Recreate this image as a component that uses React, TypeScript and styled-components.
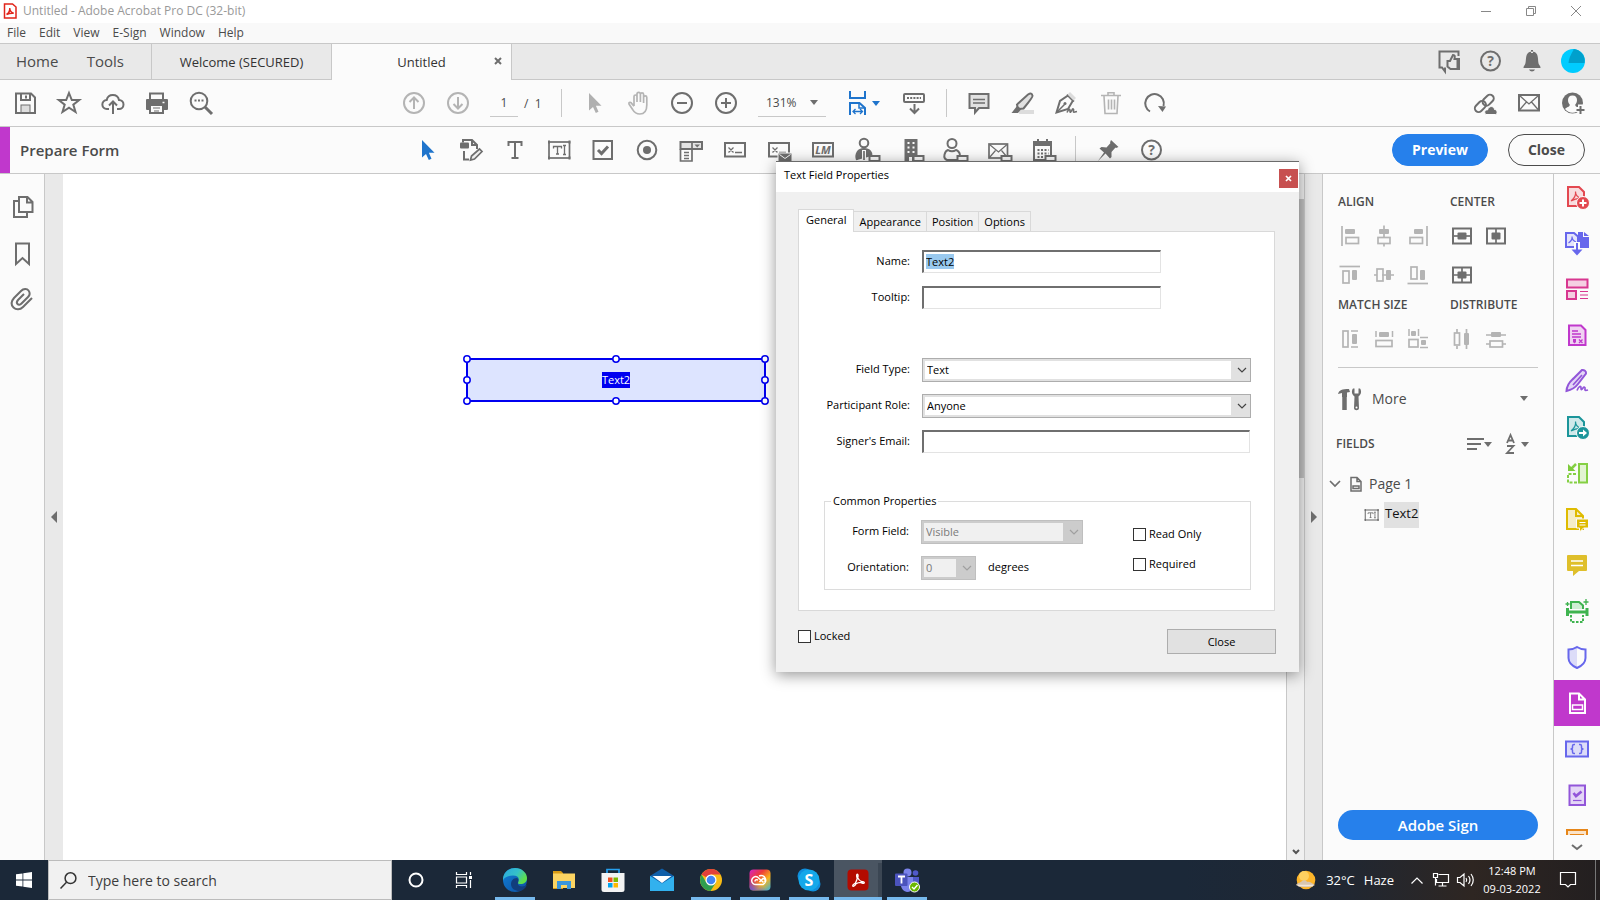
import React, { useEffect, useRef } from "react";
import styled, { createGlobalStyle, css } from "styled-components";

const UI = `"Open Sans", "Noto Sans", sans-serif`;
const INK = "#6e6e6e";
const PALE = "#b4b4b4";
const LINE = "#c8c8c8";
const BLUE = "#2680eb";
const MAGENTA = "#c038cc";
const FIELD = "#0000f0";

const GlobalStyle = createGlobalStyle`
  * { box-sizing: border-box; }
  body { margin: 0; font-family: ${UI}; font-size: 12px; color: #4b4b4b; overflow: hidden; }
  button, input, select { font-family: inherit; font-size: inherit; color: inherit; margin: 0; }
  button { cursor: pointer; }
`;

/* ---------- shared parts ---------- */

const Shell = styled.div`
  display: flex;
  flex-direction: column;
  height: 100vh;
  background: #fbfbfb;
`;

const Svg = styled.svg`
  display: block;
  flex: none;
  overflow: visible;
`;

type IconProps = { size?: number; color?: string; children: React.ReactNode };
const Icon = ({ size = 24, color = INK, children }: IconProps) => (
  <Svg width={size} height={size} viewBox={`0 0 ${size} ${size}`} fill="none" stroke={color} strokeWidth={2} aria-hidden="true">
    {children}
  </Svg>
);

const BareButton = styled.button`
  display: flex;
  align-items: center;
  justify-content: center;
  padding: 0;
  border: 0;
  background: none;
`;

const ToolButton = styled(BareButton)<{ $w?: number }>`
  width: ${(p) => p.$w ?? 44}px;
  height: 44px;
  flex: none;
`;

const Divider = styled.span`
  width: 1px;
  height: 28px;
  margin: 0 10px;
  background: ${LINE};
`;

const Caret = ({ color = INK }: { color?: string }) => (
  <Svg width="8" height="5" viewBox="0 0 8 5" fill={color} aria-hidden="true">
    <path d="M0 0h8L4 5z" />
  </Svg>
);

/* ---------- window chrome ---------- */

const TitleBar = styled.header`
  display: flex;
  align-items: center;
  height: 23px;
  flex: none;
  padding: 0 0 2px 3px;
  gap: 6px;
  background: #fff;
  color: #999;
`;

const WindowButtons = styled.div`
  display: flex;
  margin-left: auto;
  padding-right: 2px;
`;

const WindowButton = styled(BareButton)`
  width: 45px;
  height: 20px;
`;

const MenuBar = styled.nav`
  display: flex;
  align-items: center;
  height: 21px;
  flex: none;
  padding-left: 7px;
  gap: 13px;
  border-bottom: 1px solid ${LINE};
  background: #f9f9f9;
`;

const MenuItem = styled(BareButton)`
  font-size: 12px;
  line-height: 18px;
`;

const TabStrip = styled.div`
  display: flex;
  height: 36px;
  flex: none;
  background: #e9e9e9;
  box-shadow: inset 0 -1px ${LINE};
`;

const PlainTabs = styled.div`
  display: flex;
  width: 151px;
  padding: 0 27px 2px 16px;
  justify-content: space-between;
  font-size: 15px;
`;

const DocTab = styled.div<{ $active?: boolean }>`
  position: relative;
  display: flex;
  width: 180px;
  border-left: 1px solid ${LINE};
  color: #333;
  ${(p) =>
    p.$active &&
    css`
      width: 181px;
      border-right: 1px solid ${LINE};
      background: #fbfbfb;
    `}
`;

const DocTabLabel = styled(BareButton)`
  flex: 1;
  font-size: 13px;
`;

const DocTabClose = styled(BareButton)`
  position: absolute;
  right: 6px;
  top: 7px;
  width: 14px;
  height: 20px;
`;

const StripActions = styled.div`
  display: flex;
  align-items: center;
  margin-left: auto;
  padding: 0 7px 2px 0;
`;

const Toolbar = styled.div`
  display: flex;
  align-items: center;
  height: 47px;
  flex: none;
  border-bottom: 1px solid ${LINE};
  background: #fbfbfb;
`;

const FileTools = styled.div`
  display: flex;
  width: 392px;
  padding-left: 3px;
`;

const ToolGroup = styled.div<{ $end?: boolean }>`
  display: flex;
  align-items: center;
  ${(p) => p.$end && "margin-left: auto; padding-right: 5px;"}
`;

const PageBox = styled.div`
  display: flex;
  align-items: center;
  width: 71px;
  padding-left: 10px;
  gap: 6px;
  font-size: 12px;
`;

const PageInput = styled.input`
  width: 28px;
  height: 28px;
  padding: 0;
  border: 0;
  border-bottom: 1px solid ${LINE};
  background: none;
  text-align: center;
`;

const ZoomBox = styled.label`
  display: flex;
  align-items: center;
  width: 68px;
  height: 28px;
  margin: 0 11px 0 10px;
  padding-right: 8px;
  border-bottom: 1px solid ${LINE};
`;

const ZoomSelect = styled.select`
  flex: 1;
  min-width: 0;
  padding: 0 0 0 8px;
  border: 0;
  appearance: none;
  background: none;
`;

const FitButton = styled(ToolButton)`
  gap: 4px;
  margin-right: 5px;
`;

const FormTitle = styled.h1`
  align-self: stretch;
  display: flex;
  align-items: center;
  width: 405px;
  margin: 0;
  padding-left: 10px;
  border-left: 10px solid ${MAGENTA};
  font-size: 15px;
  font-weight: 600;
`;

const FormActions = styled.div`
  display: flex;
  gap: 20px;
  margin-left: auto;
  padding-right: 15px;
`;

const Pill = styled.button<{ $solid?: boolean }>`
  height: 32px;
  padding: 0 19px;
  border: 1px solid ${(p) => (p.$solid ? BLUE : "#4b4b4b")};
  border-radius: 16px;
  background: ${(p) => (p.$solid ? BLUE : "transparent")};
  color: ${(p) => (p.$solid ? "#fff" : "#4b4b4b")};
  font-size: 14px;
  line-height: 20px;
  font-weight: 700;
`;

/* ---------- body ---------- */

const Body = styled.div`
  display: flex;
  flex: 1;
  min-height: 0;
`;

const LeftRail = styled.nav`
  display: flex;
  flex-direction: column;
  align-items: center;
  width: 45px;
  padding-top: 10px;
  border-right: 1px solid ${LINE};
`;

const RailButton = styled(BareButton)`
  width: 44px;
  height: 46px;
`;

const Gutter = styled.div<{ $w: number }>`
  display: flex;
  align-items: center;
  justify-content: center;
  width: ${(p) => p.$w}px;
  background: #e9e9e9;
`;

const Page = styled.main`
  position: relative;
  flex: 1;
  background: #fff;
`;

const FieldBox = styled.div`
  position: absolute;
  left: 403px;
  top: 184px;
  display: flex;
  align-items: center;
  justify-content: center;
  width: 300px;
  height: 44px;
  border: 2px solid ${FIELD};
  background: #dde4ff;
`;

const FieldName = styled.span`
  padding: 0;
  background: ${FIELD};
  color: #fff;
  font-size: 11px;
  line-height: 16px;
`;

const Handle = styled(Svg)<{ $x: number; $y: number }>`
  position: absolute;
  left: ${(p) => `calc((100% + 2px) * ${p.$x} - 5px)`};
  top: ${(p) => `calc((100% + 2px) * ${p.$y} - 5px)`};
  fill: #fff;
  stroke: ${FIELD};
  stroke-width: 1.5;
`;

const ScrollBar = styled.div`
  display: flex;
  flex-direction: column;
  align-items: center;
  width: 19px;
  padding-bottom: 5px;
  border: solid ${LINE};
  border-width: 0 1px;
  background: #f0f0f0;
`;

const Thumb = styled.div`
  align-self: stretch;
  height: 279px;
  margin: 25px 0 auto;
  background: #c1c1c1;
`;

const SidePanel = styled.aside`
  display: flex;
  flex-direction: column;
  width: 232px;
  padding: 0 15px 20px;
  border: solid ${LINE};
  border-width: 0 1px;
`;

const Pairs = styled.div`
  display: grid;
  grid-template-columns: 112px 88px;
  padding-top: 16px;
`;

const PanelHeading = styled.h2`
  margin: 0;
  font-size: 12px;
  line-height: 24px;
  font-weight: 600;
`;

const IconGrid = styled.div<{ $tall?: boolean }>`
  display: flex;
  flex-wrap: wrap;
  align-content: flex-start;
  row-gap: 4px;
  height: ${(p) => (p.$tall ? 79 : 45)}px;
  padding-top: 4px;
`;

const AlignButton = styled(BareButton)`
  width: 34px;
  height: 35px;
  padding-right: 10px;
`;

const MoreRow = styled(BareButton)`
  justify-content: flex-start;
  gap: 10px;
  height: 62px;
  margin-top: 5px;
  padding-right: 10px;
  border-top: 1px solid ${LINE};
  font-size: 14px;
`;

const Push = styled.span`
  margin-left: auto;
`;

const FieldsHead = styled.div`
  display: flex;
  align-items: center;
  height: 24px;
  margin: 3px 0 0 -2px;
  padding-right: 9px;
`;

const SortButton = styled(BareButton)<{ $gap: number }>`
  gap: ${(p) => p.$gap}px;
  margin-left: 13px;
`;

const Tree = styled.ul`
  margin: 12px 0 auto -9px;
  padding: 0;
  list-style: none;
  font-size: 14px;
`;

const TreeItem = styled.li<{ $child?: boolean }>`
  display: flex;
  align-items: center;
  gap: 5px;
  height: 31px;
  padding-left: ${(p) => (p.$child ? 35 : 0)}px;
  color: ${(p) => (p.$child ? "#111" : "#4b4b4b")};
`;

const Picked = styled.span`
  height: 26px;
  padding: 0 1px;
  background: #e1e1e1;
  font-size: 13px;
  line-height: 23px;
`;

const SignButton = styled.button`
  height: 30px;
  border: 0;
  border-radius: 15px;
  background: ${BLUE};
  color: #fff;
  font-size: 15px;
  font-weight: 600;
`;

const RightRail = styled.nav`
  display: flex;
  flex-direction: column;
  width: 46px;
  overflow: hidden;
`;

const AppButton = styled(BareButton)<{ $active?: boolean }>`
  height: 46px;
  flex: none;
  background: ${(p) => (p.$active ? MAGENTA : "none")};
`;

const RailEnd = styled(BareButton)`
  flex: 1;
  flex-direction: column;
  justify-content: flex-end;
  gap: 9px;
  padding-bottom: 9px;
`;

/* ---------- dialog ---------- */

const Dialog = styled.section`
  position: absolute;
  left: 776px;
  top: 161px;
  width: 523px;
  border-top: 1px solid #6b6b6b;
  background: #f0f0f0;
  box-shadow: 0 3px 14px rgba(0, 0, 0, 0.42);
  color: #000;
  font-size: 11px;
  line-height: 16px;
`;

const DialogTitle = styled.header`
  display: flex;
  align-items: center;
  justify-content: space-between;
  height: 30px;
  padding: 0 1px 5px 8px;
  background: #fff;
`;

const DialogX = styled(BareButton)`
  width: 19px;
  height: 19px;
  margin-top: 8px;
  background: #c75050;
`;

const DialogBody = styled.div`
  padding: 17px 24px 18px 22px;
`;

const Tabs = styled.div`
  display: flex;
  align-items: flex-end;
  height: 22px;
`;

const Tab = styled.button<{ $on?: boolean }>`
  height: 20px;
  padding: 0 5px;
  border: 1px solid #d9d9d9;
  border-width: 1px 1px 0 0;
  background: #f0f0f0;
  line-height: 18px;
  ${(p) =>
    p.$on &&
    css`
      z-index: 1;
      height: 23px;
      margin-bottom: -1px;
      padding: 0 7px 2px;
      border-left-width: 1px;
      background: #fff;
    `}
`;

const TabPanel = styled.div`
  height: 380px;
  padding: 18px 23px 20px 25px;
  border: 1px solid #d9d9d9;
  background: #fff;
`;

const Row = styled.div<{ $gap?: number }>`
  display: flex;
  align-items: flex-start;
  height: 24px;
  margin-bottom: ${(p) => p.$gap ?? 12}px;
`;

const Label = styled.label<{ $w?: number }>`
  width: ${(p) => p.$w ?? 86}px;
  margin-right: 12px;
  text-align: right;
  line-height: 22px;
  white-space: nowrap;
`;

const TextInput = styled.input<{ $wide?: boolean }>`
  width: ${(p) => (p.$wide ? 328 : 239)}px;
  height: 23px;
  padding: 0 2px 2px;
  border: solid;
  border-width: 2px 1px 1px 2px;
  border-color: #6f6f6f #e3e3e3 #e3e3e3 #6f6f6f;
  background: #fff;
  outline: 0;
  &::selection { background: #99c9ef; color: #000; }
`;

const SelectFrame = styled.span<{ $w: number; $off?: boolean }>`
  display: flex;
  align-items: center;
  width: ${(p) => p.$w}px;
  height: 24px;
  padding: 2px 3px 2px 2px;
  border: 1px solid ${(p) => (p.$off ? "#bfbfbf" : "#adadad")};
  background: ${(p) => (p.$off ? "#cccccc" : "#e1e1e1")};
  gap: 6px;
`;

const Select = styled.select`
  flex: 1;
  min-width: 0;
  height: 18px;
  padding: 0 0 0 2px;
  border: 0;
  appearance: none;
  background: #fff;
  line-height: 18px;
  &:disabled { background: #f0f0f0; color: #7a7a7a; opacity: 1; }
`;

const Group = styled.fieldset`
  display: flex;
  height: 98px;
  margin: 38px 0 0;
  padding: 10px 0 0 11px;
  border: 1px solid #dcdcdc;
`;

const GroupLegend = styled.legend`
  margin-left: -5px;
  padding: 0 2px;
  line-height: 18px;
`;

const Column = styled.div<{ $left?: number }>`
  display: flex;
  flex-direction: column;
  margin-left: ${(p) => p.$left ?? 0}px;
`;

const Unit = styled.span`
  margin-left: 12px;
  line-height: 22px;
`;

const Check = styled.label`
  display: flex;
  align-items: center;
  gap: 3px;
  height: 18px;
  margin: 5px 0 7px;
  white-space: nowrap;
`;

const CheckInput = styled.input`
  width: 13px;
  height: 13px;
  border: 1px solid #333;
  appearance: none;
  background: #fff;
`;

const DialogFoot = styled.footer`
  display: flex;
  justify-content: space-between;
  padding-top: 11px;
  margin-right: -1px;
`;

const DialogClose = styled.button`
  width: 109px;
  height: 25px;
  margin-top: 7px;
  border: 1px solid #adadad;
  background: #e1e1e1;
`;

/* ---------- taskbar ---------- */

const TaskBar = styled.footer`
  display: flex;
  height: 40px;
  flex: none;
  background: linear-gradient(90deg, #1b2838 0, #1b2838 74%, #202732 84%, #2e2622 92%, #231f20 100%);
  color: #fff;
`;

const Start = styled(BareButton)`
  width: 48px;
`;

const SearchBox = styled.label`
  display: flex;
  align-items: center;
  width: 344px;
  padding-left: 11px;
  gap: 11px;
  border: 1px solid #bcbcbc;
  background: #f1f1f1;
`;

const SearchInput = styled.input`
  flex: 1;
  padding: 0;
  border: 0;
  outline: 0;
  background: none;
  font-size: 14px;
  &::placeholder { color: #3c3c3c; opacity: 1; }
`;

const AppIcons = styled.div`
  display: flex;
  padding-left: 2px;
`;

const TaskButton = styled(BareButton)<{ $open?: boolean; $active?: boolean }>`
  width: ${(p) => (p.$active ? 48 : 40)}px;
  margin: ${(p) => (p.$active ? "0 0 0 1px" : "0 4px 0 5px")};
  border: solid transparent;
  border-width: 3px 0;
  ${(p) => p.$open && "border-bottom-color: #76b9ed;"}
  ${(p) => p.$active && "background: #4a5562; border-top-color: #4a5562; box-shadow: inset -4px 0 #3b4653;"}
`;

const Tray = styled.div`
  display: flex;
  align-items: center;
  margin-left: auto;
  padding-right: 4px;
  font-size: 13px;
`;

const Weather = styled.span`
  display: flex;
  align-items: center;
  gap: 9px;
  margin-right: 11px;
`;

const TrayIcon = styled(BareButton)`
  width: 24px;
  height: 40px;
`;

const Clock = styled.time`
  width: 66px;
  margin: 0 3px 0 2px;
  text-align: center;
  font-size: 11px;
  line-height: 18px;
  white-space: nowrap;
`;

const Notice = styled(BareButton)`
  width: 48px;
  height: 40px;
  border-right: 1px solid #777;
  padding-right: 8px;
`;

/* ---------- drawings ---------- */

const Glyph = styled.text<{ $light?: boolean }>`
  fill: ${(p) => (p.$light ? "#fff" : INK)};
  stroke: none;
  text-anchor: middle;
  font-family: ${UI};
`;

const acrobatMark = "M11.3 6.2c.9 0 1 1.8.4 3.6 1 2 2.400 3.100 3.600 3.700 2 .1 3.200.5 3 1.300-.3 1-2 .5-3.500-.4-1.800.1-3.400.6-4.700 1.200-1.200 2-2.500 3.200-3.200 2.600-.7-.7.700-2.200 2.500-3.200.800-1.400 1.500-3 1.800-4.700-.7-1.800-.8-4.100.1-4.100z";

const IconSave = () => (
  <Icon><path d="M3 2.500h15l4 4V22H3zM8 3v6h9V3" /><path d="M13 4.500v3" /><rect x="8" y="14" width="9" height="7.500" fill="#ddd" strokeWidth="1" /></Icon>
);
const IconStar = () => (
  <Icon><path d="M12 2l2.800 7h7.400l-5.900 4.600 2.200 7.400L12 16.700 5.500 21l2.200-7.400L1.800 9h7.400z" /></Icon>
);
const IconUpload = () => (
  <Icon><path d="M8 18H6a4.500 4.500 0 0 1-.3-9A6.300 6.300 0 0 1 18 9a4.500 4.500 0 0 1 0 9h-2M12 23V11M8 14.500l4-4 4 4" /></Icon>
);
const IconPrint = () => (
  <Icon><path d="M5 8V2.500h13V8" /><path d="M2 9h20v9H2z" fill={INK} strokeLinejoin="round" /><rect x="5" y="14" width="13" height="8" fill="#fbfbfb" /><path d="M8 17h7M9 20h5" strokeWidth="1.200" /><path d="M17.500 11.500h2" stroke="#fff" strokeWidth="1.500" /></Icon>
);
const IconFind = () => (
  <Icon><circle cx="10" cy="10" r="8.300" /><path d="M16 16l7 7" strokeWidth="3" /><path d="M5.500 9.500h9" strokeDasharray="2 1.500" /></Icon>
);
const IconArrow = ({ down }: { down?: boolean }) => (
  <Icon color={PALE}>
    <circle cx="12" cy="12" r="10" />
    <g transform={down ? "rotate(180 12 12)" : undefined}><path d="M12 18V7M7.500 11l4.500-4.500 4.500 4.500" /></g>
  </Icon>
);
const Pointer = ({ color }: { color: string }) => (
  <Icon><path d="M7 2v17.500l4-3.500 2.800 6 2.700-1.200-2.600-6h5.600z" fill={color} stroke="none" /></Icon>
);
const IconHand = () => (
  <Icon color={PALE}><path d="M6.500 15V5.500a1.500 1.500 0 0 1 3 0V11M9.500 11V3a1.700 1.700 0 0 1 3.400 0v8M12.900 11V3.500a1.600 1.600 0 0 1 3.200 0V12M16.100 12V6.500a1.600 1.600 0 0 1 3.200 0V14c0 6-2.500 9-7 9-5 0-6-2.500-7.500-5L1.500 13c-.6-1.300 1-2.300 2-1.300l3 3.500" strokeWidth="1.700" transform="translate(1.500 0)" /></Icon>
);
const IconZoom = ({ plus }: { plus?: boolean }) => (
  <Icon><circle cx="12" cy="12" r="10" /><path d={plus ? "M7 12h10M12 7v10" : "M7 12h10"} /></Icon>
);
const IconFit = () => (
  <Icon color="#1f74cc"><path d="M6 0v7h15V0M6 24V12h9.500l5.500 5v7" /><path d="M15 12v5h6" strokeWidth="1.500" /><path d="M9 20.500h9M11.500 18L9 20.500l2.500 2.500M16 18l2.500 2.500L16 23" strokeWidth="1.300" /></Icon>
);
const IconScroll = () => (
  <Icon><rect x="2" y="3" width="20" height="8" rx="1" /><path d="M5 7h14" strokeDasharray="2 1.200" /><path d="M12.500 13v9M8 17.500l4.500 4.500 4.500-4.500" /></Icon>
);
const IconComment = () => (
  <Icon><path d="M2.500 3h19v14H12l-4 4.500V17H2.500z" fill="#e1e1e1" /><path d="M6 8.500h12M6 12h12" strokeWidth="1.300" /></Icon>
);
const IconHighlight = () => (
  <Icon><path d="M8 19h15v4H8z" fill="#dcdcdc" stroke="none" /><path d="M17 3.500q4-2.500 4.500 1.500c.3 1-2 4-9 12.500l-4 .5-2-2-.5-2.500z" fill="#e1e1e1" /><path d="M6 15l4 3.500L7 22H.5z" fill={INK} stroke="none" /></Icon>
);
const IconPen = () => (
  <Icon><path d="M1.500 21.500L5 10l8-5.500 5 5L13 18z" /><path d="M12 3.500l7 7M1.500 21.500l8-8" strokeWidth="1.500" /><circle cx="10" cy="12.500" r="1.500" fill={INK} stroke="none" /><path d="M15 1l6 6-2.500 2.500-6-6z" fill="#dcdcdc" stroke="none" /><path d="M12 21.500c2-4 3-4 3-1.500s1 1 2-1 2-1 1.500 1 1.500 1 3.500.5" strokeWidth="1.600" /></Icon>
);
const IconTrash = () => (
  <Icon color={PALE}><path d="M2 4.500h20M9 4V1.800h6V4M5 5l1 17.500h12L19 5M9.500 8.500v10M12.500 8.500v10M15.500 8.500v10" strokeWidth="1.600" /></Icon>
);
const IconRotate = () => (
  <Icon><path d="M7 20.500A9.300 9.300 0 1 1 20.500 15" /><path d="M15 15l8 .5-3.500 5.500z" fill={INK} stroke="none" /></Icon>
);
const IconLink = () => (
  <Icon><g transform="rotate(-45 12 12)"><rect x="0" y="7.500" width="12.500" height="7.500" rx="3.700" /><rect x="10" y="8.500" width="12.500" height="7.500" rx="3.700" /></g><path d="M13 23.500c-2.500-2-1-5 1.500-4.500 1.500-5 6.500-4 7-.5 3 0 3.500 4.500 1 5z" fill={INK} stroke="#fbfbfb" strokeWidth="1" /></Icon>
);
const IconMail = () => (
  <Icon><rect x="2" y="4" width="20" height="15.500" /><path d="M2.500 4.500L12 13l9.500-8.500M2.500 19l7-8M21.500 19l-7-8" strokeWidth="1.300" /></Icon>
);
const IconUser = () => (
  <Icon>
    <circle cx="11.500" cy="12" r="10.500" fill={INK} stroke="none" />
    <path d="M11.500 4.500c-3 0-4.500 2-4.500 4.500 0 2 .8 3.500 1.800 4.700 0 2.600-3.800 2.300-4.800 4.300a9.500 9.500 0 0 0 15 0c-1-2-4.800-1.700-4.800-4.300 1-1.200 1.800-2.700 1.800-4.700 0-2.500-1.500-4.500-4.500-4.500z" fill="#fbfbfb" stroke="none" />
    <path d="M19.500 13.500v10M14.500 18.500h10" stroke="#fbfbfb" strokeWidth="5" />
    <path d="M19.500 15v8M15.500 19h8" />
  </Icon>
);
const IconEdit = () => (
  <Icon><rect x="1" y="4.500" width="9" height="6" rx="1" fill={INK} stroke="none" /><path d="M4 4.500V2h9l5 5v4M5 13v8.500h5M13 2v5h5" /><path d="M11.500 22l1-4 8-7 2.500 2.500-7.500 7.500z" fill="#eee" strokeWidth="1.700" /></Icon>
);
const IconText = () => (
  <Icon><path d="M5.500 8V4h13v4M12 4v16M8.500 20h7" /></Icon>
);
const TextFieldShape = () => (
  <><rect x="2" y="4" width="20.500" height="16" strokeWidth="1.700" /><path d="M1 4h2M21.500 4h2M1 20h2M21.500 20h2" strokeWidth="3" /><path d="M6.500 10.500V8.500h8v2M10.500 8.500V16M9 16h3M16 7.500h3M16 16.500h3M17.500 7.500v9" strokeWidth="1.300" /></>
);
const IconTextField = () => <Icon><TextFieldShape /></Icon>;
const IconCheck = () => (
  <Icon><rect x="2.500" y="3" width="18.500" height="18" /><path d="M7 12l3.500 3.500 6.500-7" strokeWidth="3" /></Icon>
);
const IconRadio = () => (
  <Icon><circle cx="12" cy="12" r="9.300" /><circle cx="12" cy="12" r="4" fill={INK} stroke="none" /></Icon>
);
const IconDrop = () => (
  <Icon><path d="M1.500 4h21.500v7H1.500z" fill="#e4e4e4" /><path d="M13 4v7M1.500 11v12H13V11M5 14.500h5M5 17.500h5M5 20.500h5" strokeWidth="1.700" /><path d="M15.500 6.500h5.500L18.200 9.500z" fill={INK} stroke="none" /></Icon>
);
const SignShape = () => (
  <><rect x="2" y="5" width="20" height="13.500" /><path d="M5.500 9.500l5 5M10.500 9.500l-5 5M12 14.500h7" strokeWidth="1.300" /></>
);
const IconSign = () => <Icon><SignShape /></Icon>;
const IconSignMail = () => (
  <Icon><SignShape /><rect x="11" y="15" width="14" height="9" fill={INK} stroke="#fbfbfb" strokeWidth="1" /><path d="M12.500 16.500l5.500 4 5.500-4" stroke="#fbfbfb" strokeWidth="1" /></Icon>
);
const IconInitials = () => (
  <Icon><rect x="2" y="5" width="20" height="13.500" /><Glyph x="12" y="16" fontSize="11" fontWeight="700" fontStyle="italic">LM</Glyph></Icon>
);
const Tag = () => <rect x="14.500" y="18" width="10" height="5" fill="#fbfbfb" />;
const IconSigner = () => (
  <Icon><circle cx="9" cy="5" r="4.300" /><path d="M2 22c-2-6 1-11 7-11s8 4 7.500 7" fill={INK} /><path d="M9 12v10" stroke="#fbfbfb" strokeWidth="4" /><path d="M9 13v9" strokeWidth="1.700" /><Tag /></Icon>
);
const IconCompany = () => (
  <Icon><path d="M5.500 1h13v22h-13z" fill={INK} stroke="none" /><path d="M9.500 4v11M14.500 4v11" stroke="#fbfbfb" strokeDasharray="2 2.500" /><path d="M10 19h3v4h-3z" fill="#fbfbfb" stroke="none" /><Tag /></Icon>
);
const IconPerson = () => (
  <Icon><circle cx="9" cy="5.500" r="4.500" /><path d="M14 22H4c-5-2-2-9 1-10 3 2 5 2 8 0 2 .5 3.500 2.500 4 5" /><Tag /></Icon>
);
const IconMailField = () => (
  <Icon><rect x="2" y="6" width="18.500" height="14" strokeWidth="1.700" /><path d="M2.500 6.500l9 7.500 8.500-7.500M2.500 19.500l6-7M20 19l-5.500-6.500" strokeWidth="1.200" /><Tag /></Icon>
);
const IconDate = () => (
  <Icon><rect x="3" y="4" width="17" height="18" /><path d="M3 6h17" strokeWidth="4" /><path d="M7 1v4M16 1v4" /><path d="M6.500 12h11M6.500 15.500h11M6.500 19h6" strokeDasharray="2 1.500" /><Tag /></Icon>
);
const IconPin = () => (
  <Icon><path d="M15 2l7.500 7-2.500 1-.5-.5-4 4.500 0 5-1.500 1.500-4.500-5L2 23l6-8.500-4.500-4L5.500 9l5 .5 4-4.500-.5-.5z" fill={INK} stroke="none" /></Icon>
);
const IconHelp = () => (
  <Icon><circle cx="11.500" cy="12" r="9.500" /><Glyph x="11.500" y="17" fontSize="14" fontWeight="700">?</Glyph></Icon>
);
const IconFeedback = () => (
  <Icon><path d="M7 18.500v4l-3-4H1.500V2.500h19V7" /><path d="M9.500 12l2.500 0 3-6c2 0 2 1 1.500 4H21v10h-8.500l-3-2.500z" fill="#e9e9e9" /><path d="M18.500 11h3.500v9h-3.500z" fill={INK} stroke="none" /></Icon>
);
const IconBell = () => (
  <Icon><path d="M12 2.500c-8 .5-5 9-7 13-1 1.500-1.500 2-1.500 3.500h17c0-1.500-.5-2-1.500-3.500-2-4 1-12.500-7-13zM9 20.500h6c-1 2.500-5 2.500-6 0zM11 1h2v3h-2z" fill={INK} stroke="none" /></Icon>
);
const IconPages = () => (
  <Icon><path d="M8.500 6H4v16h13v-4" /><path d="M9 2h8.500l5 5v10H9zM17 2v5.500h5.500" /></Icon>
);
const IconBookmark = () => <Icon><path d="M6 2.500h13V23l-6.500-6L6 23z" /></Icon>;
const IconClip = () => (
  <Icon><path d="M22 11l-9 9c-3 3-7 3-9.500.5S1 14.500 4 11l7-7c2.500-2.500 6-2.500 7.500-.5S20 8 18 10l-6.500 6.500c-1.500 1.500-3 1.500-4 .5s-.8-2.500.5-4L14 7" /></Icon>
);

/* align / size / distribute: outline for open boxes, fill for solid ones */
const Solid = (p: { x: number; y: number; w: number; h: number }) => (
  <rect x={p.x} y={p.y} width={p.w} height={p.h} rx="1" fill={PALE} stroke="none" />
);
const alignArt: Record<string, React.ReactNode> = {
  left: <><path d="M4 2v20" /><Solid x={7} y={5} w={10} h={5} /><rect x="8" y="13.500" width="12.500" height="6" /></>,
  hcenter: <><path d="M12 1.500v4M12 10v3M12 20v2.500" /><Solid x={7} y={5} w={10} h={5} /><rect x="6" y="13.500" width="12" height="6" /></>,
  right: <><path d="M21 2v20" /><Solid x={8} y={5} w={9} h={5} /><rect x="4" y="13.500" width="12.500" height="6" /></>,
  top: <><path d="M1.500 3.500h20.500" /><rect x="5" y="8" width="6" height="12" /><Solid x={14} y={7} w={5} h={10} /></>,
  vcenter: <><path d="M2 12h3M10 12h4M19 12h3" /><rect x="5" y="6" width="6" height="12" /><Solid x={14} y={7} w={5} h={10} /></>,
  bottom: <><path d="M1.500 20.500h20.500" /><rect x="5" y="4" width="6" height="12" /><Solid x={14} y={7} w={5} h={10} /></>,
  height: <><rect x="5" y="4" width="5" height="16" /><Solid x={14} y={7} w={5} h={10} /><path d="M13 4h7M13 20h7" strokeWidth="1.500" /></>,
  width: <><Solid x={7} y={5} w={10} h={5} /><rect x="4" y="13.500" width="16" height="6" /><path d="M4 4v6M20.500 4v6" strokeWidth="1.500" /></>,
  both: <><path d="M3 2v7M12.500 2v7M14 10.500h8M14 20.500h8" strokeWidth="1.500" /><Solid x={5} y={4} w={5} h={5} /><rect x="3" y="12.500" width="9" height="7.500" /><Solid x={15} y={13} w={5} h={5} /></>,
  disth: <><path d="M7 2v4M7 19v3M16.500 2v20" /><rect x="4.500" y="6" width="5" height="12" /><Solid x={14} y={6} w={5} h={12} /></>,
  distv: <><path d="M2 8h20M2 17h4M19 17h3" /><Solid x={7} y={5} w={10} h={5} /><rect x="6" y="14" width="12.500" height="6" /></>,
};
const centerArt = {
  v: "M2 12h20",
  h: "M12 4v16",
  both: "M2 12h20M12 4v16",
};
const IconCenter = ({ kind }: { kind: keyof typeof centerArt }) => (
  <Icon><rect x="3" y="4.500" width="18" height="15" /><path d={centerArt[kind]} strokeWidth="1.700" /><rect x="7.500" y="8.500" width="9" height="7" rx="1" fill={INK} stroke="none" /></Icon>
);
const IconTools = () => (
  <Icon>
    <path d="M0 7c1-4 4-5 11-5l1 3-3 .5V10H4V6z" fill={INK} stroke="none" />
    <path d="M6.500 9v14" strokeWidth="4.500" />
    <path d="M15 1.500c-2 3-1 6 1.500 8L16 21c0 3 5 3 5 0l-.5-11.500c2.500-2 3.500-5 1.500-8l-1.500 0v5h-4v-5z" fill={INK} stroke="none" />
    <circle cx="18.500" cy="20.500" r="1" fill="#fff" stroke="none" />
  </Icon>
);

/* right-hand application rail */
const PdfPage = ({ c, tint }: { c: string; tint: string }) => (
  <>
    <path d="M3 2h11l5 5v14H3z" fill={tint} stroke={c} />
    <path d="M6 16c4-3 5-6 4.500-9.500 0 4 2 6 6 7-4-.5-7 .5-10.500 2.500z" stroke={c} strokeWidth="1.200" />
  </>
);
const railApps: { name: string; art: React.ReactNode }[] = [
  { name: "Create PDF", art: <><PdfPage c="#e34850" tint="#f8dcde" /><circle cx="18" cy="18" r="6.500" fill="#e34850" stroke="#fbfbfb" strokeWidth="1" /><path d="M14.500 18h7M18 14.500v7" stroke="#fff" /></> },
  { name: "Combine Files", art: <><path d="M13 1h5v5h6v11H13z" fill="#6767ec" stroke="none" /><path d="M19 1l5 4h-5z" fill="#6767ec" stroke="none" /><path d="M1 2h8l4 3.500V16H1z" fill="#e4e4fb" stroke="#6767ec" /><path d="M3.500 12c3-2 4-4 3.500-6.500 0 3 1.500 4.500 4 5.500" stroke="#6767ec" strokeWidth="1.200" /><path d="M12 11v8" stroke="#fbfbfb" strokeWidth="6" /><path d="M12 12v7" stroke="#6767ec" /><path d="M6.500 18.500h11L12 24.500z" fill="#6767ec" stroke="none" /></> },
  { name: "Organize Pages", art: <g stroke="#d83790"><rect x="2" y="2.500" width="20.500" height="8" fill="#f5cfe2" /><rect x="2" y="14" width="9" height="8" fill="#f5cfe2" /><path d="M15 14.500h8M15 18h8M15 21.500h8" strokeWidth="1.200" /></g> },
  { name: "Edit PDF", art: <g stroke={MAGENTA}><path d="M4 2.500h12l4.500 4.500V22H4z" fill="#f0d3f2" /><path d="M7 8h6M7 11h9M7 14h9" strokeWidth="1.300" /><path d="M8 16h3v3l-1.500 1.500L8 19z" fill={MAGENTA} stroke="none" /><path d="M14 16.500l3.500 3.500M17.500 16.500L14 20" strokeWidth="1.300" /></g> },
  { name: "Fill and Sign", art: <g stroke="#9256d9"><path d="M1.500 22C2 14 6 12 9 9l8-8c2-.5 4.500 1.500 4 3.500L13 15c-3 4-7 6-11.500 7z" fill="#e4d6f6" /><path d="M8 16l9-10M12 21.500c2-5 4-5 4-2.500s1 1.500 2 0 2.500-1 2 1 1.500 1.500 3 1" strokeWidth="1.700" /></g> },
  { name: "Export PDF", art: <><PdfPage c="#1b959a" tint="#cfe9ea" /><circle cx="18" cy="18" r="6.500" fill="#1b959a" stroke="#fbfbfb" strokeWidth="1" /><path d="M14 18h6" stroke="#fff" /><path d="M18 14.500l4 3.500-4 3.500z" fill="#fff" stroke="none" /></> },
  { name: "Rotate Pages", art: <g stroke="#85d044"><rect x="14" y="3" width="8" height="18.500" fill="#e2f4d2" /><path d="M11 13H3v8.500h9" strokeDasharray="3 1.500" /><path d="M11 3L6 8" strokeWidth="2.500" /><path d="M3 3v7h7.500z" fill="#7ecb3c" stroke="none" /></g> },
  { name: "Send for Comments", art: <g stroke="#dfbb00"><path d="M2 2h9l7 7v13H2z" fill="#f5edc6" /><path d="M11 2v7h7" /><path d="M11.500 12h12v9h-5l-4 4v-4h-3z" fill="#dfbb00" stroke="#fbfbfb" strokeWidth="1" /><path d="M14.500 15.500h6M14.500 18h6" stroke="#fff" strokeWidth="1" /></g> },
  { name: "Comment", art: <><path d="M2 3q0-1 1-1h18q1 0 1 1v14q0 1-1 1h-7l-6 5v-5H3q-1 0-1-1z" fill="#dfbf2b" stroke="none" /><path d="M6 8h12M6 12.500h12" stroke="#fff" strokeWidth="1.500" /></> },
  { name: "Scan and OCR", art: <g stroke="#3fb34f"><path d="M6 10V3h8l4 3.500V10" fill="#cfeed3" /><path d="M2.500 9v8M22 9v8M1 13h22" strokeWidth="3" /><path d="M6 16v7h12v-7" strokeDasharray="2.500 1.500" /><path d="M21 0v6M18.500 3h5M2.500 3v4M.5 5h4" strokeWidth="1.300" /></g> },
  { name: "Protect", art: <><path d="M12 2C9 4 6 4.500 3.500 4.500V13c0 5 4 8 8.500 10z" fill="#dcdcf8" stroke="none" /><path d="M12 2c3 2 6 2.500 8.500 2.500V13c0 5-4 8-8.500 10-4.500-2-8.500-5-8.500-10V4.500C6 4.500 9 4 12 2z" stroke="#6767ec" /></> },
  { name: "Prepare Form", art: <g stroke="#fff"><path d="M5 2.500h9l6 6V22H5zM14 2.500v6h6" /><rect x="7.500" y="14" width="10" height="4.500" strokeWidth="1.500" /></g> },
  { name: "JavaScript", art: <g stroke="#6767ec"><rect x="1" y="4.500" width="22" height="15" fill="#dcdcf8" /><path d="M10 7.500H9q-1.500 0-1.500 1.500v1.500q0 1.500-2 1.500 2 0 2 1.500V15q0 1.500 1.500 1.500h1M14 7.500h1q1.500 0 1.500 1.500v1.500q0 1.500 2 1.500-2 0-2 1.500V15q0 1.500-1.500 1.500h-1" strokeWidth="1.500" /></g> },
  { name: "Action Wizard", art: <g stroke="#9256d9"><rect x="4.500" y="2.500" width="15.500" height="19.500" fill="#e4d6f6" /><path d="M8.500 10l2.500 3 5.500-4.500" strokeWidth="2.700" /><path d="M8 17.500h8.500" strokeWidth="1.200" /></g> },
];

/* ---------- composed regions ---------- */

const alignRows = ["left", "hcenter", "right", "top", "vcenter", "bottom"];

const ToolRow = ({ items }: { items: [string, React.ReactNode][] }) => (
  <>
    {items.map(([name, art]) => (
      <ToolButton key={name} aria-label={name}>{art}</ToolButton>
    ))}
  </>
);

const SmallArt = ({ kind }: { kind: string }) => (
  <AlignButton aria-label={kind}>
    <Svg width="24" height="24" viewBox="0 0 24 24" fill="none" stroke={PALE} strokeWidth="1.700">{alignArt[kind]}</Svg>
  </AlignButton>
);

type DropProps = { id: string; width: number; value: string; disabled?: boolean };
const Drop = ({ id, width, value, disabled }: DropProps) => (
  <SelectFrame $w={width} $off={disabled}>
    <Select id={id} disabled={disabled}><option>{value}</option></Select>
    <Svg width="10" height="6" viewBox="0 0 10 6" fill="none" stroke={disabled ? "#a0a0a0" : "#444"} strokeWidth="1.200">
      <path d="M1 1l4 4 4-4" />
    </Svg>
  </SelectFrame>
);

const PropertiesDialog = () => {
  const nameRef = useRef<HTMLInputElement>(null);
  useEffect(() => {
    nameRef.current?.focus();
    nameRef.current?.select();
  }, []);
  return (
    <Dialog role="dialog" aria-label="Text Field Properties">
      <DialogTitle>
        Text Field Properties
        <DialogX aria-label="Close window">
          <Svg width="7" height="7" viewBox="0 0 7 7" stroke="#fff" strokeWidth="1.700"><path d="M1 1l5 5M6 1L1 6" /></Svg>
        </DialogX>
      </DialogTitle>
      <DialogBody>
        <Tabs>
          <Tab $on>General</Tab>
          <Tab>Appearance</Tab>
          <Tab>Position</Tab>
          <Tab>Options</Tab>
        </Tabs>
        <TabPanel>
          <Row><Label htmlFor="name">Name:</Label><TextInput id="name" ref={nameRef} defaultValue="Text2" /></Row>
          <Row $gap={48}><Label htmlFor="tip">Tooltip:</Label><TextInput id="tip" /></Row>
          <Row><Label htmlFor="type">Field Type:</Label><Drop id="type" width={329} value="Text" /></Row>
          <Row><Label htmlFor="role">Participant Role:</Label><Drop id="role" width={329} value="Anyone" /></Row>
          <Row $gap={0}><Label htmlFor="mail">Signer's Email:</Label><TextInput id="mail" $wide /></Row>
          <Group>
            <GroupLegend>Common Properties</GroupLegend>
            <Column>
              <Row><Label $w={73} htmlFor="visible">Form Field:</Label><Drop id="visible" width={162} value="Visible" disabled /></Row>
              <Row $gap={0}><Label $w={73} htmlFor="turn">Orientation:</Label><Drop id="turn" width={55} value="0" disabled /><Unit>degrees</Unit></Row>
            </Column>
            <Column $left={50}>
              <Check><CheckInput type="checkbox" />Read Only</Check>
              <Check><CheckInput type="checkbox" />Required</Check>
            </Column>
          </Group>
        </TabPanel>
        <DialogFoot>
          <Check><CheckInput type="checkbox" />Locked</Check>
          <DialogClose>Close</DialogClose>
        </DialogFoot>
      </DialogBody>
    </Dialog>
  );
};

const EdgeArt = () => (
  <Icon>
    <defs>
      <linearGradient id="edgeTop" x1="0" y1="0" x2="1" y2="0.500"><stop offset="0" stopColor="#2aa7e0" /><stop offset="0.600" stopColor="#35c1c8" /><stop offset="1" stopColor="#5fe04a" /></linearGradient>
      <linearGradient id="edgeLow" x1="0" y1="0" x2="1" y2="1"><stop offset="0" stopColor="#0f7fd8" /><stop offset="1" stopColor="#0f4f9e" /></linearGradient>
    </defs>
    <circle cx="12" cy="12" r="12" fill="url(#edgeLow)" stroke="none" />
    <path d="M0 12C0 4 6 0 12 0c7 0 12 5 12 10 0 4-3 6-6.500 6-3 0-3.500-1.500-2.500-2.500 2-3 0-6-5-6-5 0-9 2-10 5z" fill="url(#edgeTop)" stroke="none" />
    <path d="M24 17c-3 2-8 2-9-.5-.5-1.500.5-2 .5-4 0-1-.5-2-1.500-2.500-4 0-6 3-6 6 0 5 5 7 8 7s6-2 8-6z" fill="#123e7c" stroke="none" />
  </Icon>
);
const taskApps: { name: string; open?: boolean; active?: boolean; art: React.ReactNode }[] = [
  { name: "Edge", open: true, art: <EdgeArt /> },
  { name: "Explorer", art: <Icon><g stroke="none"><path d="M1 3h8l2 2v16H1z" fill="#d99b14" /><path d="M1 5.500h22V20H1z" fill="#fcd462" /><path d="M5 21v-8h14v8h-4v-4H9v4z" fill="#3a96dd" /></g></Icon> },
  { name: "Store", art: <Icon><g stroke="none"><path d="M6 6V1.500h12V6" stroke="#26a0ee" strokeWidth="1.700" /><path d="M.5 5h23v16.500q0 2.500-2.500 2.500H3q-2.500 0-2.500-2.500z" fill="#f3f3f3" /><path d="M7 9.500h4.500V14H7z" fill="#f25022" /><path d="M12.500 9.500H17V14h-4.500z" fill="#7fba00" /><path d="M7 15h4.500v4.500H7z" fill="#00a4ef" /><path d="M12.500 15H17v4.500h-4.500z" fill="#ffb900" /></g></Icon> },
  { name: "Mail", art: <Icon><g stroke="none"><path d="M0 8L12 0.500 24 8v8H0z" fill="#0f5ea8" /><path d="M0 8l12 7.500L24 8v15H0z" fill="#32b1ee" /><path d="M2.500 8h19L12 15z" fill="#fff" /></g></Icon> },
  { name: "Chrome", open: true, art: <Icon><g stroke="none"><circle cx="12" cy="12" r="11" fill="#f9bc15" /><path d="M12 12L2.500 6.500A11 11 0 0 1 21.500 6.500H12z" fill="#e2403a" /><path d="M2.500 6.500A11 11 0 0 0 11.500 23L17 14.500 12 12 7 14z" fill="#2f9e4f" /><circle cx="12" cy="12" r="5.500" fill="#fff" /><circle cx="12" cy="12" r="4.300" fill="#4285f4" /></g></Icon> },
  { name: "Creative Cloud", open: true, art: <Icon><defs><linearGradient id="ccA" x1="0" y1="0" x2="1" y2="1"><stop offset="0" stopColor="#d522c8" /><stop offset="0.350" stopColor="#ee3a3a" /><stop offset="0.650" stopColor="#f8b31c" /><stop offset="1" stopColor="#2bb1e5" /></linearGradient><linearGradient id="ccB" x1="0" y1="1" x2="0.700" y2="0"><stop offset="0" stopColor="#5b4fe9" /><stop offset="0.450" stopColor="#5b4fe9" stopOpacity="0" /></linearGradient></defs><rect x="1.500" y="1.500" width="21" height="21" rx="4" fill="url(#ccA)" stroke="none" /><rect x="1.500" y="1.500" width="21" height="21" rx="4" fill="url(#ccB)" stroke="none" /><g stroke="#fff" strokeWidth="1.500"><path d="M14 16.500H8.500a4 4 0 1 1 1-7.500l6 5.500M11 8a4.500 4.500 0 1 1 4 8.500h-2M11.500 14l3.500-3.500a2 2 0 0 1 1.500 3.500M10 12q-3-1-3 1.500" /></g></Icon> },
  { name: "Skype", open: true, art: <Icon><g stroke="none"><circle cx="8" cy="8" r="7.500" fill="#0f8fdd" /><circle cx="16" cy="16" r="7.500" fill="#0f8fdd" /><circle cx="12" cy="12" r="10.500" fill="#14a8ea" /></g><Glyph $light x="12" y="17.500" fontSize="16" fontWeight="700">S</Glyph></Icon> },
  { name: "Acrobat", open: true, active: true, art: <Icon><rect x="1.500" y="1.500" width="21" height="21" rx="4" fill="#b30b00" stroke="none" /><path d={acrobatMark} stroke="#fff" strokeWidth="1.300" /></Icon> },
  { name: "Teams", open: true, art: <Icon><g stroke="none"><circle cx="20.500" cy="5" r="2.800" fill="#5059c9" /><circle cx="12.500" cy="4.500" r="4" fill="#7b83eb" /><path d="M16 9h8v8q0 4-5 4z" fill="#5059c9" /><path d="M6 9h12v9q-1 6-6 6-5-1-6-6z" fill="#7b83eb" /><rect x="0" y="5.500" width="12.500" height="12.500" rx="1" fill="#4b53bc" /><path d="M3 8.500h7M6.500 8.500v7" stroke="#fff" strokeWidth="1.800" /><circle cx="19.500" cy="19" r="5" fill="#6bb700" stroke="#fff" strokeWidth="1" /><path d="M17 19l2 2 3.500-4" stroke="#fff" strokeWidth="1.400" fill="none" /></g></Icon> },
];

const Tasks = () => (
  <TaskBar>
    <Start aria-label="Start">
      <Svg width="16" height="16" viewBox="0 0 16 16" fill="#fff"><path d="M0 2.300L6.500 1.400v6.200H0zM7.300 1.300L16 0v7.600H7.300zM0 8.400h6.500v6.200L0 13.700zM7.300 8.400H16V16l-8.700-1.300z" /></Svg>
    </Start>
    <SearchBox>
      <Svg width="17" height="17" viewBox="0 0 17 17" fill="none" stroke="#333" strokeWidth="1.500"><circle cx="10.500" cy="6.200" r="5.400" /><path d="M6.500 10.200L.5 16.500" /></Svg>
      <SearchInput aria-label="Search" placeholder="Type here to search" />
    </SearchBox>
    <Start aria-label="Cortana"><Svg width="16" height="16" viewBox="0 0 16 16" fill="none" stroke="#fff" strokeWidth="2"><circle cx="8" cy="8" r="6.500" /></Svg></Start>
    <Start aria-label="Task view">
      <Svg width="16" height="16" viewBox="0 0 16 16" fill="none" stroke="#fff" strokeWidth="1.200"><path d="M.5 0v2.500h10V0M.5 16v-2.500h10V16M.5 5h10v6H.5zM14.500 0v3M14.500 8v8" /><path d="M13 4h3v3h-3z" fill="#fff" stroke="none" /></Svg>
    </Start>
    <AppIcons>
      {taskApps.map((a) => (
        <TaskButton key={a.name} aria-label={a.name} $open={a.open} $active={a.active}>{a.art}</TaskButton>
      ))}
    </AppIcons>
    <Tray>
      <Weather>
        <Svg width="22" height="20" viewBox="0 0 22 20"><circle cx="11" cy="10" r="9.300" fill="#fdb52a" /><circle cx="9" cy="6" r="5" fill="#fed060" /><path d="M1 15c2-3 5-2 6-4 3-2 5 0 5 1 3-1 4 1 8 3-4 3-15 3-19 0z" fill="#d8c6b0" /><path d="M3 15.500h15" stroke="#f1e6d8" strokeWidth="1.500" /></Svg>
        <span>32°C</span>
        <span>Haze</span>
      </Weather>
      <TrayIcon aria-label="Hidden icons"><Svg width="12" height="7" viewBox="0 0 12 7" fill="none" stroke="#fff" strokeWidth="1.200"><path d="M.5 6.500L6 1l5.500 5.500" /></Svg></TrayIcon>
      <TrayIcon aria-label="Network"><Svg width="16" height="14" viewBox="0 0 16 14" fill="none" stroke="#fff" strokeWidth="1.200"><path d="M5.500 1.500h10v8h-12V6M9.500 9.500V13M5.500 13h8M.5.500h4v4h-4zM2.500 4.500v8" /></Svg></TrayIcon>
      <TrayIcon aria-label="Volume"><Svg width="17" height="14" viewBox="0 0 17 14" fill="none" stroke="#fff" strokeWidth="1.200"><path d="M.5 4.500H3L7 1v12L3 9.500H.5zM9 5q1.500 2 0 4M11.500 3q3 4 0 8M14 1q4.500 6 0 12" /></Svg></TrayIcon>
      <Clock>12:48 PM<br />09-03-2022</Clock>
      <Notice aria-label="Notifications"><Svg width="16" height="16" viewBox="0 0 16 16" fill="none" stroke="#fff" strokeWidth="1.200"><path d="M.5.500h15v12h-5L8 15l-2.500-2.500h-5z" /></Svg></Notice>
    </Tray>
  </TaskBar>
);

const handles = [[0, 0], [0.5, 0], [1, 0], [0, 0.5], [1, 0.5], [0, 1], [0.5, 1], [1, 1]];

export default function App() {
  return (
    <Shell>
      <GlobalStyle />
      <TitleBar>
        <Svg width="14" height="16" viewBox="0 0 14 16" fill="#fff" stroke="#e1251b" strokeWidth="1.500"><path d="M1.500 1h8L13 4v11H1.500z" /><path d="M3.500 11.500c2.500-1.500 3.500-4 3.200-6.500.2 3 1.500 4.500 4 5.300-2.500-.3-4.500 0-7.200 1.200z" /></Svg>
        <span>Untitled - Adobe Acrobat Pro DC (32-bit)</span>
        <WindowButtons>
          <WindowButton aria-label="Minimize"><Svg width="10" height="10" viewBox="0 0 10 10" stroke="#888"><path d="M0 5.500h10" /></Svg></WindowButton>
          <WindowButton aria-label="Restore"><Svg width="10" height="10" viewBox="0 0 10 10" stroke="#888" fill="none"><path d="M.5 2.500h7v7h-7zM2.500 2V.500h7v7H8" /></Svg></WindowButton>
          <WindowButton aria-label="Close"><Svg width="10" height="10" viewBox="0 0 10 10" stroke="#888"><path d="M0 0l10 10M10 0L0 10" /></Svg></WindowButton>
        </WindowButtons>
      </TitleBar>
      <MenuBar>
        {["File", "Edit", "View", "E-Sign", "Window", "Help"].map((m) => <MenuItem key={m}>{m}</MenuItem>)}
      </MenuBar>
      <TabStrip>
        <PlainTabs><BareButton>Home</BareButton><BareButton>Tools</BareButton></PlainTabs>
        <DocTab><DocTabLabel>Welcome (SECURED)</DocTabLabel></DocTab>
        <DocTab $active>
          <DocTabLabel>Untitled</DocTabLabel>
          <DocTabClose aria-label="Close tab"><Svg width="8" height="8" viewBox="0 0 8 8" stroke={INK} strokeWidth="2"><path d="M1 1l6 6M7 1L1 7" /></Svg></DocTabClose>
        </DocTab>
        <StripActions>
          <ToolButton $w={41} aria-label="Feedback"><IconFeedback /></ToolButton>
          <ToolButton $w={41} aria-label="Help"><IconHelp /></ToolButton>
          <ToolButton $w={41} aria-label="Alerts"><IconBell /></ToolButton>
          <ToolButton $w={41} aria-label="Account">
            <Svg width="24" height="24" viewBox="0 0 24 24"><circle cx="12" cy="12" r="12" fill="#00ccff" /><path d="M12.500 1Q8 8 7.500 14H23.500A12 12 0 0 0 12.500 0z" fill="#00a0cc" /></Svg>
          </ToolButton>
        </StripActions>
      </TabStrip>
      <Toolbar>
        <FileTools>
          <ToolRow items={[["Save", <IconSave />], ["Star", <IconStar />], ["Upload", <IconUpload />], ["Print", <IconPrint />], ["Find", <IconFind />]]} />
        </FileTools>
        <ToolGroup>
          <ToolRow items={[["Previous page", <IconArrow />], ["Next page", <IconArrow down />]]} />
          <PageBox><PageInput aria-label="Page number" defaultValue="1" /><span>/&nbsp; 1</span></PageBox>
          <Divider />
          <ToolRow items={[["Select", <Pointer color="#b0b0b0" />], ["Hand", <IconHand />], ["Zoom out", <IconZoom />], ["Zoom in", <IconZoom plus />]]} />
          <ZoomBox><ZoomSelect aria-label="Zoom"><option>131%</option></ZoomSelect><Caret /></ZoomBox>
          <FitButton $w={50} aria-label="Fit width"><IconFit /><Caret color="#1f74cc" /></FitButton>
          <ToolButton aria-label="Page display"><IconScroll /></ToolButton>
          <Divider />
          <ToolRow items={[["Comment", <IconComment />], ["Highlight", <IconHighlight />], ["Draw", <IconPen />], ["Delete", <IconTrash />], ["Rotate", <IconRotate />]]} />
        </ToolGroup>
        <ToolGroup $end>
          <ToolRow items={[["Share link", <IconLink />], ["Send", <IconMail />], ["Invite", <IconUser />]]} />
        </ToolGroup>
      </Toolbar>
      <Toolbar>
        <FormTitle>Prepare Form</FormTitle>
        <ToolGroup>
          <ToolRow items={[
            ["Select object", <Pointer color="#1f74cc" />], ["Edit", <IconEdit />], ["Add text", <IconText />], ["Text field", <IconTextField />],
            ["Check box", <IconCheck />], ["Radio button", <IconRadio />], ["Dropdown", <IconDrop />], ["Signature", <IconSign />],
            ["Signature by mail", <IconSignMail />], ["Initials", <IconInitials />], ["Title", <IconSigner />], ["Company", <IconCompany />],
            ["Person", <IconPerson />], ["Email field", <IconMailField />], ["Date", <IconDate />],
          ]} />
          <Divider />
          <ToolRow items={[["Keep selected", <IconPin />], ["Form help", <IconHelp />]]} />
        </ToolGroup>
        <FormActions><Pill $solid>Preview</Pill><Pill>Close</Pill></FormActions>
      </Toolbar>
      <Body>
        <LeftRail>
          <RailButton aria-label="Pages"><IconPages /></RailButton>
          <RailButton aria-label="Bookmarks"><IconBookmark /></RailButton>
          <RailButton aria-label="Attachments"><IconClip /></RailButton>
        </LeftRail>
        <Gutter $w={18}><Svg width="6" height="12" viewBox="0 0 6 12" fill={INK}><path d="M6 0v12L0 6z" /></Svg></Gutter>
        <Page>
          <FieldBox>
            <FieldName>Text2</FieldName>
            {handles.map(([x, y]) => (
              <Handle key={`${x}-${y}`} $x={x} $y={y} width="8" height="8" viewBox="0 0 8 8"><circle cx="4" cy="4" r="3.200" /></Handle>
            ))}
          </FieldBox>
        </Page>
        <ScrollBar>
          <Thumb />
          <Svg width="8" height="6" viewBox="0 0 8 6" fill="none" stroke="#555" strokeWidth="2"><path d="M1 1l3 3 3-3" /></Svg>
        </ScrollBar>
        <Gutter $w={17}><Svg width="6" height="12" viewBox="0 0 6 12" fill={INK}><path d="M0 0v12l6-6z" /></Svg></Gutter>
        <SidePanel>
          <Pairs>
            <PanelHeading>ALIGN</PanelHeading>
            <PanelHeading>CENTER</PanelHeading>
            <IconGrid $tall>{alignRows.map((k) => <SmallArt key={k} kind={k} />)}</IconGrid>
            <IconGrid $tall>
              <AlignButton aria-label="Center vertically"><IconCenter kind="v" /></AlignButton>
              <AlignButton aria-label="Center horizontally"><IconCenter kind="h" /></AlignButton>
              <AlignButton aria-label="Center both"><IconCenter kind="both" /></AlignButton>
            </IconGrid>
            <PanelHeading>MATCH SIZE</PanelHeading>
            <PanelHeading>DISTRIBUTE</PanelHeading>
            <IconGrid>{["height", "width", "both"].map((k) => <SmallArt key={k} kind={k} />)}</IconGrid>
            <IconGrid>{["disth", "distv"].map((k) => <SmallArt key={k} kind={k} />)}</IconGrid>
          </Pairs>
          <MoreRow><IconTools />More<Push><Caret /></Push></MoreRow>
          <FieldsHead>
            <PanelHeading>FIELDS</PanelHeading>
            <Push />
            <SortButton $gap={0} aria-label="Order"><Svg width="17" height="14" viewBox="0 0 17 14" stroke={INK} strokeWidth="2"><path d="M0 2h17M0 7h14M0 12h10" /></Svg><Caret /></SortButton>
            <SortButton $gap={6} aria-label="Sort">
              <Svg width="10" height="22" viewBox="0 0 10 22" fill="none" stroke={INK} strokeWidth="1.800"><path d="M2 10l3.500-8L9 10M3 7.500h5M2 13h6.500L2 20h7" /></Svg><Caret />
            </SortButton>
          </FieldsHead>
          <Tree>
            <TreeItem>
              <Svg width="12" height="8" viewBox="0 0 12 8" fill="none" stroke={INK} strokeWidth="1.700"><path d="M1 1l5 5 5-5" /></Svg>
              <Svg width="18" height="16" viewBox="0 0 18 16" fill="none" stroke={INK} strokeWidth="1.500"><path d="M5 1.500h6l4 4V15H5zM11 1.500v4h4M7 10h6v2.500H7z" /></Svg>
              Page 1
            </TreeItem>
            <TreeItem $child>
              <Svg width="15" height="16" viewBox="0 0 24 24" fill="none" stroke={INK} strokeWidth="2"><TextFieldShape /></Svg>
              <Picked>Text2</Picked>
            </TreeItem>
          </Tree>
          <SignButton>Adobe Sign</SignButton>
        </SidePanel>
        <RightRail>
          {railApps.map((a) => (
            <AppButton key={a.name} aria-label={a.name} $active={a.name === "Prepare Form"}><Icon>{a.art}</Icon></AppButton>
          ))}
          <RailEnd aria-label="More tools">
            <Svg width="22" height="6" viewBox="0 0 22 6" fill="#fbe3c8" stroke="#e68619" strokeWidth="2"><path d="M1 6V1h20v5" /><path d="M4 5.500h14" strokeWidth="1" /></Svg>
            <Svg width="12" height="7" viewBox="0 0 12 7" fill="none" stroke={INK} strokeWidth="2"><path d="M1 1l5 4 5-4" /></Svg>
          </RailEnd>
        </RightRail>
      </Body>
      <Tasks />
      <PropertiesDialog />
    </Shell>
  );
}
